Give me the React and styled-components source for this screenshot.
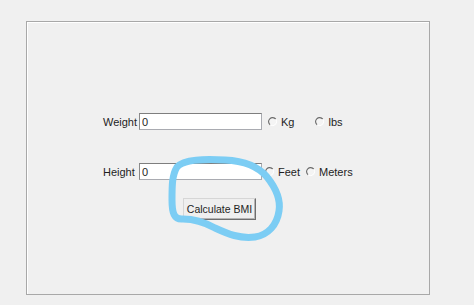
import React from "react";
import styled, { createGlobalStyle } from "styled-components";

const GlobalStyle = createGlobalStyle`
  html, body {
    margin: 0;
    padding: 0;
    background: #f0f0f0;
  }
  body {
    font-family: "Liberation Sans", Arial, sans-serif;
    color: #1e1e1e;
  }
`;

function Radio() {
  return (
    <RadioMark width="10" height="10" viewBox="0 0 10 10">
      <circle cx="5" cy="5" r="4" fill="#f4f4f4" />
      <path d="M7.8 2.2 A4 4 0 1 0 2.2 7.8" stroke="#6a6a6a" strokeWidth="1.1" fill="none" />
      <path d="M2.2 7.8 A4 4 0 0 0 7.8 2.2" stroke="#ffffff" strokeWidth="1" fill="none" />
    </RadioMark>
  );
}

function Option({ label, space }) {
  return (
    <OptionItem space={space}>
      <Radio />
      <OptionText>{label}</OptionText>
    </OptionItem>
  );
}

function App() {
  return (
    <Page>
      <GlobalStyle />
      <Panel>
        <Row>
          <Label>Weight</Label>
          <Field defaultValue="0" />
          <Options lead={6}>
            <Option label="Kg" space={0} />
            <Option label="lbs" space={21} />
          </Options>
        </Row>
        <Row gapTop={33}>
          <Label>Height</Label>
          <Field defaultValue="0" />
          <Options lead={3}>
            <Option label="Feet" space={0} />
            <Option label="Meters" space={6} />
          </Options>
        </Row>
        <ButtonRow>
          <Button>Calculate BMI</Button>
        </ButtonRow>
      </Panel>
      <Scribble width="474" height="305" viewBox="0 0 474 305">
        <path
          d="M177 167 C184 159 205 159 225 160 C245 161 258 166 267 177 C275 187 281 199 279 211 C277 225 268 235 255 237 C240 239 228 234 215 228 C204 222 194 219 183 219 C174 220 172 213 172 200 C172 186 172 175 177 167 Z"
          fill="none"
          stroke="#7ccdf4"
          strokeWidth="7"
          strokeLinejoin="round"
          strokeLinecap="round"
        />
      </Scribble>
    </Page>
  );
}

export default App;

const Page = styled.div`
  position: relative;
  width: 474px;
  height: 305px;
  padding: 21px 0 0 26px;
  box-sizing: border-box;
  background: #f0f0f0;
`;

const Panel = styled.div`
  width: 404px;
  height: 274px;
  box-sizing: border-box;
  border: 1px solid #a8a8a8;
  box-shadow: inset 1px 1px 0 #ffffff;
  display: flex;
  flex-direction: column;
  padding: 91px 0 0 76px;
`;

const Row = styled.div`
  display: flex;
  align-items: center;
  height: 17px;
  margin-top: ${(p) => (p.gapTop ? `${p.gapTop}px` : "0")};
`;

const Label = styled.span`
  width: 35px;
  margin-right: 1px;
  font-size: 11px;
  white-space: nowrap;
`;

const Field = styled.input`
  width: 123px;
  height: 17px;
  box-sizing: border-box;
  border: 1px solid #a9abb1;
  border-top-color: #7e7e7e;
  border-left-color: #8a8a8a;
  background: #fff;
  padding: 0 2px;
  margin: 0;
  font-family: "Liberation Sans", Arial, sans-serif;
  font-size: 11px;
  color: #1e1e1e;
  outline: none;
`;

const Options = styled.div`
  display: flex;
  align-items: center;
  margin-left: ${(p) => p.lead}px;
`;

const OptionItem = styled.label`
  display: flex;
  align-items: center;
  gap: 3px;
  margin-left: ${(p) => p.space}px;
`;

const RadioMark = styled.svg`
  display: block;
`;

const OptionText = styled.span`
  font-size: 11px;
`;

const ButtonRow = styled.div`
  display: flex;
  margin-top: 18px;
  padding-left: 80px;
`;

const Button = styled.button`
  width: 73px;
  height: 22px;
  box-sizing: border-box;
  margin: 0;
  padding: 0;
  background: #efefef;
  border: 1px solid;
  border-color: #d6d6d6 #6e6e6e #6e6e6e #d6d6d6;
  box-shadow: inset -1px -1px 0 #b4b4b4;
  font-family: "Liberation Sans", Arial, sans-serif;
  font-size: 10.5px;
  color: #1e1e1e;
`;

const Scribble = styled.svg`
  position: absolute;
  left: 0;
  top: 0;
  pointer-events: none;
`;
